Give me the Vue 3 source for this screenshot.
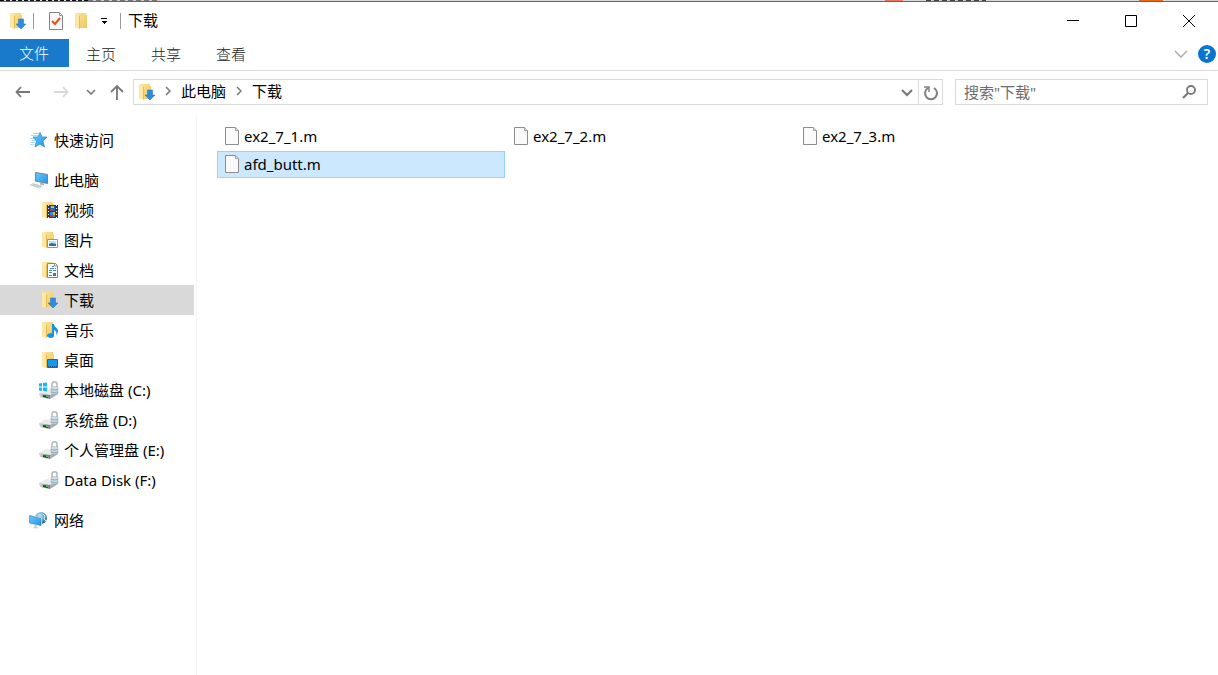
<script setup>
import { ref } from 'vue'

const tabs = ['文件', '主页', '共享', '查看']
const tree = ref([
  { label: '快速访问', icon: 'star', root: true },
  { label: '此电脑', icon: 'pc', root: true, gap: true },
  { label: '视频', icon: 'video' },
  { label: '图片', icon: 'picture' },
  { label: '文档', icon: 'document' },
  { label: '下载', icon: 'download' },
  { label: '音乐', icon: 'music' },
  { label: '桌面', icon: 'desktop' },
  { label: '本地磁盘 (C:)', icon: 'system-disk', disk: true },
  { label: '系统盘 (D:)', icon: 'disk', disk: true },
  { label: '个人管理盘 (E:)', icon: 'disk', disk: true },
  { label: 'Data Disk (F:)', icon: 'disk', disk: true },
  { label: '网络', icon: 'network', root: true, gap: true },
])
const current = ref('下载')
const files = ['ex2_7_1.m', 'ex2_7_2.m', 'ex2_7_3.m', 'afd_butt.m']
const selected = ref('afd_butt.m')
const query = ref('')
</script>

<template>
  <div class="window">
    <svg class="defs" aria-hidden="true">
      <defs>
        <linearGradient id="gold" x1="0" y1="0" x2="1" y2="1">
          <stop offset="0" stop-color="#fbe39a" /><stop offset="1" stop-color="#efc75a" />
        </linearGradient>
        <linearGradient id="screen" x1="0" y1="0" x2="1" y2="1">
          <stop offset="0" stop-color="#6cc8f8" /><stop offset="1" stop-color="#2196ea" />
        </linearGradient>
        <linearGradient id="metal" x1="0" y1="0" x2="1" y2="0">
          <stop offset="0" stop-color="#d9dadb" /><stop offset="1" stop-color="#777b7e" />
        </linearGradient>
        <radialGradient id="globe" cx=".4" cy=".3" r=".7">
          <stop offset="0" stop-color="#c5e4f2" /><stop offset=".5" stop-color="#6fafd0" /><stop offset="1" stop-color="#2f7099" />
        </radialGradient>
        <symbol id="folder" viewBox="0 0 18 18">
          <path d="M3 1h9v2h1v13H3z" fill="url(#gold)" />
          <path d="M1 1h1l4 2v14l-4-1H1z" fill="#fce7a5" />
          <path d="M5 3l1 1v13l-1-1z" fill="#e6bd54" />
        </symbol>
        <symbol id="download" viewBox="0 0 18 18">
          <use href="#folder" />
          <path d="M9.500 7h5v5H17l-5 5-5-5h2.500z" fill="#2c8de0" stroke="#3379bd" stroke-width=".6" />
        </symbol>
        <symbol id="video" viewBox="0 0 18 18">
          <use href="#folder" />
          <path d="M6 4h11v13H6z" fill="#36383e" />
          <path d="M9 5h5v5H9z" fill="#2467bd" /><path d="M9 11h5v5H9z" fill="#3288df" />
          <path d="M10 5h3v2h-3zM12 11h2v3h-2z" fill="#ebb52d" /><path d="M9 8h3v2H9zM9 14h3v2H9z" fill="#a64837" />
          <path d="M7.500 4v13M15.500 4v13" stroke="#eee" stroke-width="1" stroke-dasharray="1 2" />
        </symbol>
        <symbol id="picture" viewBox="0 0 18 18">
          <use href="#folder" />
          <path d="M6.500 8.500h10v8h-10z" fill="#fff" stroke="#8c989d" />
          <path d="M8 10h7v5H8z" fill="#b9dff5" /><path d="M8 13l3-1 4 1v2H8z" fill="#316b9c" /><path d="M8 14h3v1H8z" fill="#34845e" />
        </symbol>
        <symbol id="document" viewBox="0 0 18 18">
          <use href="#folder" />
          <path d="M6.500 2.500h8l2 2v12h-10z" fill="#fff" stroke="#85898c" />
          <path d="M13.500 2v3H17" fill="none" stroke="#85898c" />
          <path d="M11 5.500h2M9 7.500h4M14 7.500h1M8 9.500h3M12 9.500h3M8 11.500h3M8 14.500h3" stroke="#3a91cc" />
          <path d="M12 12h3v3h-3z" fill="#397eab" /><path d="M12 14h3v1h-3z" fill="#458858" />
        </symbol>
        <symbol id="music" viewBox="0 0 18 18">
          <use href="#folder" />
          <path d="M11 3h2c0 3 4 4 4 7 0 2-1 3-2 4 1-3 0-4-2-5v5c0 2-1 3-3 3s-4-1-4-2.500S8 12 11 12z" fill="#1593e5" />
        </symbol>
        <symbol id="desktop" viewBox="0 0 18 18">
          <use href="#folder" />
          <path d="M6.500 8.500h10v8h-10z" fill="#1598ed" stroke="#1769a4" />
          <path d="M7 15.500h9" stroke="#155991" stroke-dasharray="1 1" />
        </symbol>
        <symbol id="star" viewBox="0 0 20 18">
          <path d="M4 2.500h6M2 4.500h7M1 7.500h5M3 9.500h4M2 11.500h4M1 13.500h4" stroke="#a9dbf7" />
          <path d="M11 1.500l2 4.500h5l-4 4 1.500 6-4.500-3-5 3 1.500-6-3.500-4h5z" fill="url(#screen)" stroke="#2587ca" stroke-width=".7" />
        </symbol>
        <symbol id="pc" viewBox="0 0 20 18">
          <path d="M6.500 1.500l12 2v9l-12-2.500z" fill="url(#screen)" stroke="#75828c" />
          <path d="M11 11.500l4 1v2l-4-1z" fill="#aab3bb" />
          <path d="M0 14l4-2 10 3-3 2.500z" fill="#d4d9dd" />
          <path d="M2 14l8 2.500M4 13l8 2.500" stroke="#aeb8bf" stroke-width=".6" />
        </symbol>
        <symbol id="disk" viewBox="0 0 20 18">
          <path d="M0 12l7-4 9 1 3 2-7 5-12-2z" fill="#e9eaeb" />
          <path d="M0 12l11 2v4L1 16z" fill="url(#metal)" /><path d="M11 14l8-4v3l-8 5z" fill="#a8acae" />
          <path d="M4 14l5 1v2l-5-1z" fill="#2e3d33" /><path d="M7 15h2v1H7z" fill="#42d654" />
          <path d="M13 6V3c0-3 5-3 5 0v3" fill="none" stroke="#b0b9be" stroke-width="1.500" />
          <path d="M12 6q3.500-1 7 0v6q-3.500 2-7 0z" fill="#d3dee4" stroke="#9aabb5" stroke-width=".5" />
          <path d="M12 8.500q3.500 1 7 0M12 11q3.500 1 7 0" stroke="#7eabc4" fill="none" />
        </symbol>
        <symbol id="system-disk" viewBox="0 0 20 18">
          <use href="#disk" />
          <path d="M0 2.500L3 2v3.500H0zM4 2l4-.5v4H4zM0 6.500h3V10l-3-.5zM4 6.500h4v4L4 10z" fill="#13bdf0" />
        </symbol>
        <symbol id="network" viewBox="0 0 20 18">
          <circle cx="12" cy="7" r="6" fill="url(#globe)" />
          <path d="M14 3l2 2-1 3 2 2" fill="none" stroke="#d3ebf4" stroke-width="1" />
          <path d="M.5 4.500L12 7.500v7L.5 12z" fill="url(#screen)" stroke="#fff" stroke-width="1.600" />
          <path d="M.5 4.500L12 7.500v7L.5 12z" fill="url(#screen)" stroke="#3c86b5" stroke-width=".7" />
          <path d="M5.500 13.500l2 .5v2l3 1.200H3.500l2-1.200z" fill="#c3cbd0" />
        </symbol>
      </defs>
    </svg>

    <div class="backdrop" aria-hidden="true"></div>
    <header class="titlebar">
      <svg class="app-icon" width="18" height="18"><use href="#download" /></svg>
      <span class="rule"></span>
      <button class="quick" aria-label="属性">
        <svg width="16" height="18" viewBox="0 0 16 18">
          <path d="M1.500.5h10l3 3v14h-13z" fill="#fafafa" stroke="#858585" /><path d="M11.500.5v3h3" fill="#ddd" stroke="#999" />
          <path d="M4 9l3 3 5-6" fill="none" stroke="#e5511b" stroke-width="2" />
        </svg>
      </button>
      <button class="quick" aria-label="新建文件夹"><svg width="18" height="18"><use href="#folder" /></svg></button>
      <button class="quick more" aria-label="自定义快速访问工具栏">
        <svg width="8" height="8" viewBox="0 0 8 8" shape-rendering="crispEdges"><path d="M1 0h6v1H1z" /><path d="M1 3h6L4 6z" /></svg>
      </button>
      <span class="rule second"></span>
      <h1>下载</h1>
      <div class="controls">
        <button aria-label="最小化"><svg width="14" height="14" viewBox="0 0 14 14"><path d="M1 6.500h12" /></svg></button>
        <button aria-label="最大化"><svg width="14" height="14" viewBox="0 0 14 14"><path d="M1.500 1.500h11v11h-11z" /></svg></button>
        <button aria-label="关闭"><svg width="14" height="14" viewBox="0 0 14 14"><path d="M1 1l12 12M13 1L1 13" /></svg></button>
      </div>
    </header>

    <nav class="ribbon">
      <button v-for="(tab, i) in tabs" :key="tab" :class="{ file: i === 0 }">{{ tab }}</button>
      <div class="ribbon-end">
        <button aria-label="展开功能区"><svg width="14" height="8" viewBox="0 0 14 8"><path d="M1 1l6 6 6-6" fill="none" stroke="#a6a6a6" stroke-width="1.300" /></svg></button>
        <button class="help" aria-label="帮助">?</button>
      </div>
    </nav>

    <div class="toolbar">
      <button class="nav" aria-label="后退"><svg width="16" height="14" viewBox="0 0 16 14"><path d="M6 2L1.500 7 6 12M2 7h13" fill="none" stroke="#777" stroke-width="1.800" /></svg></button>
      <button class="nav forward" aria-label="前进"><svg width="16" height="14" viewBox="0 0 16 14"><path d="M10 2l4.500 5-4.500 5M14 7H1" fill="none" stroke="#d9d9d9" stroke-width="1.800" /></svg></button>
      <button class="nav recent" aria-label="最近位置"><svg width="10" height="6" viewBox="0 0 10 6"><path d="M1 1l4 4 4-4" fill="none" stroke="#777" stroke-width="1.600" /></svg></button>
      <button class="nav up" aria-label="上移"><svg width="14" height="16" viewBox="0 0 14 16"><path d="M1 8l6-6 6 6M7 2v14" fill="none" stroke="#777" stroke-width="1.800" /></svg></button>
      <div class="address">
        <svg width="18" height="18"><use href="#download" /></svg>
        <svg class="sep" width="6" height="10" viewBox="0 0 6 10"><path d="M1 1l4 4-4 4" /></svg>
        <a href="#pc">此电脑</a>
        <svg class="sep" width="6" height="10" viewBox="0 0 6 10"><path d="M1 1l4 4-4 4" /></svg>
        <a href="#download">下载</a>
        <button class="expand" aria-label="以前的位置"><svg width="12" height="8" viewBox="0 0 12 8"><path d="M1 1l5 5 5-5" fill="none" stroke="#777" stroke-width="2" /></svg></button>
        <button class="refresh" aria-label="刷新">
          <svg width="16" height="16" viewBox="0 0 16 16"><path d="M5 3a6 6 0 1 0 6 0" fill="none" stroke="#808080" stroke-width="2" /><path d="M1 2h5v5" fill="none" stroke="#808080" stroke-width="1.500" /></svg>
        </button>
      </div>
      <label class="search">
        <input v-model="query" type="text" placeholder="搜索&quot;下载&quot;" aria-label="搜索下载" />
        <svg width="16" height="16" viewBox="0 0 16 16"><circle cx="10" cy="6" r="4" fill="none" stroke="#777" stroke-width="1.800" /><path d="M7 9l-5 5" stroke="#777" stroke-width="2.200" /></svg>
      </label>
    </div>

    <div class="body">
      <nav class="sidebar">
        <button
          v-for="item in tree"
          :key="item.label"
          :class="{ root: item.root, disk: item.disk, gap: item.gap, current: item.label === current }"
          @click="current = item.label"
        >
          <svg :width="item.root || item.disk ? 20 : 18" height="18"><use :href="'#' + item.icon" /></svg>
          <span>{{ item.label }}</span>
        </button>
      </nav>
      <main class="files">
        <button v-for="file in files" :key="file" :class="{ selected: file === selected }" @click="selected = file">
          <svg width="15" height="18" viewBox="0 0 15 18">
            <path d="M.5.500h10l3 3v14H.5z" fill="#fafafa" stroke="#8c8c8c" /><path d="M10.500.5v3h3" fill="#e2e2e2" stroke="#a0a0a0" />
          </svg>
          <span>{{ file }}</span>
        </button>
      </main>
    </div>
  </div>
</template>

<style>
body { margin: 0; background: #fff; }
</style>

<style scoped>
.window { min-height: 100vh; display: flex; flex-direction: column; background: #fff; color: #000; font: 400 15px/20px "Noto Sans", "Noto Sans CJK SC", sans-serif; }
.defs { position: absolute; width: 0; height: 0; }
button, input { font: inherit; color: inherit; }
button { padding: 0; border: 0; background: none; }
svg { flex: none; display: block; }
.backdrop { box-sizing: border-box; height: 2px; border-bottom: 1px solid #1979ca; background: repeating-linear-gradient(90deg, #111 0 4px, #ddd 4px 6px) 0 0 / 88px 1px no-repeat, repeating-linear-gradient(90deg, #777 0 5px, #ccc 5px 8px) 88px 0 / 72px 1px no-repeat, linear-gradient(#e87761, #e87761) 885px 0 / 18px 1px no-repeat, repeating-linear-gradient(90deg, #444 0 5px, #ccc 5px 8px) 926px 0 / 60px 1px no-repeat, linear-gradient(#e86417, #e86417) 1139px 0 / 24px 1px no-repeat, #d7dadd; }
.titlebar { height: 37px; display: flex; align-items: center; padding-left: 9px; }
.rule { width: 1px; height: 16px; margin-left: 6px; background: #999; }
.quick { margin-left: 14px; }
.quick + .quick { margin-left: 10px; }
.quick.more { padding-top: 3px; }
.quick.more.more { margin-left: 8px; }
.rule.second { margin-left: 12px; }
h1 { margin: 0 0 2px 7px; font: inherit; }
.controls { display: flex; margin-left: auto; }
.controls button { width: 58px; height: 35px; display: grid; place-items: center; }
.controls button:last-child { width: 58px; }
.controls path { fill: none; stroke: #000; stroke-width: 1; }
.ribbon { height: 31px; display: flex; border-bottom: 1px solid #dadada; }
.ribbon > button { width: 65px; height: 28px; padding: 2px 1px 0 0; color: #222; font-weight: 300; }
.ribbon > button.file { width: 69px; padding: 0 1px 0 0; background: #1979ca; color: #fff; }
.ribbon-end { display: flex; align-items: center; gap: 10px; margin-left: auto; padding: 0 2px 2px 0; }
.help { width: 18px; height: 18px; border-radius: 50%; background: #0873d1; color: #fff; font-size: 14px; font-weight: 600; line-height: 18px; text-align: center; }
.toolbar { display: flex; align-items: center; padding: 8px 10px 10px 15px; }
.nav.forward { margin-left: 22px; }
.nav.recent { margin-left: 17px; }
.nav.up { margin-left: 14px; }
.address { box-sizing: border-box; flex: 1; height: 26px; display: flex; align-items: center; margin: 0 12px 0 9px; padding-left: 4px; border: 1px solid #d9d9d9; }
.address a { margin-bottom: 2px; color: #000; text-decoration: none; }
.sep { margin: 0 10px 2px 9px; }
.sep path { fill: none; stroke: #777; stroke-width: 1.500; }
.address a + .sep { margin-left: 10px; }
.expand { height: 24px; margin-left: auto; padding: 2px 5px 0; }
.refresh { height: 24px; padding: 2px 3px 0 4px; border-left: 1px solid #d9d9d9; }
.search { box-sizing: border-box; width: 253px; height: 26px; display: flex; align-items: center; padding: 0 10px 0 8px; border: 1px solid #d9d9d9; }
.search input { flex: 1; min-width: 0; padding: 0; border: 0; outline: 0; background: none; }
.search input::placeholder { color: #6d6d6d; opacity: 1; }
.body { flex: 1; display: flex; }
.sidebar { width: 196px; border-right: 1px solid #f5f5f5; padding-top: 10px; }
.sidebar button { width: 194px; height: 30px; display: flex; align-items: center; gap: 5px; padding-left: 41px; text-align: left; white-space: nowrap; }
.sidebar .root { padding-left: 29px; }
.sidebar .disk { padding-left: 39px; }
.sidebar .gap { margin-top: 10px; }
.sidebar .current { background: #d9d9d9; }
.files { flex: 1; display: grid; grid-template-columns: repeat(auto-fill, 288px); grid-auto-rows: 27px; gap: 1px; align-content: start; padding: 8px 0 0 20px; }
.files button { box-sizing: border-box; display: flex; align-items: center; gap: 4px; padding: 0 0 2px 7px; border: 1px solid transparent; text-align: left; }
.files .selected { background: #cce8ff; border-color: #99d1ff; }
</style>
